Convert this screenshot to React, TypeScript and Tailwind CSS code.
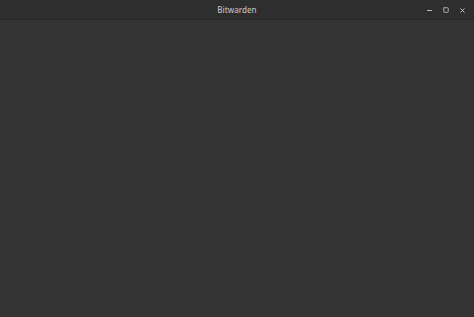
import { Minus, Square, X } from 'lucide-react';

export default function App() {
  return (
    <div className="flex h-[317px] w-[474px] flex-col bg-[#333333] font-['Noto_Sans',sans-serif]">
      {/* Title bar */}
      <div className="relative flex h-[20px] shrink-0 items-center justify-center border-b border-[#282828] bg-[#2e2e2e]">
        <span className="pt-px text-[8px] font-medium text-[#bdbdbd]">Bitwarden</span>
        <div className="absolute right-[8px] top-0 flex h-full items-center gap-[10px] pt-px text-[#d0d0d0]">
          <Minus className="h-[7px] w-[7px]" strokeWidth={3} />
          <Square className="h-[6px] w-[6px]" strokeWidth={3} />
          <X className="h-[7px] w-[7px]" strokeWidth={3} />
        </div>
      </div>
      {/* Empty content */}
      <div className="flex-1" />
    </div>
  );
}
